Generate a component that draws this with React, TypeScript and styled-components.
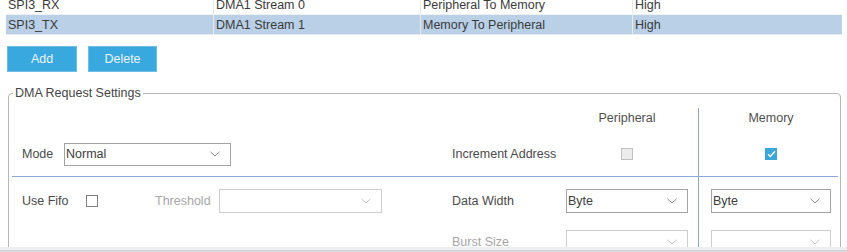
import React from "react";
import styled, { createGlobalStyle, css } from "styled-components";

const GlobalStyle = createGlobalStyle`
  html, body {
    margin: 0;
    padding: 0;
    background: #ffffff;
  }
  body {
    font-family: "Liberation Sans", Arial, sans-serif;
    font-size: 12.5px;
    color: #3b3b3b;
  }
`;

const Page = styled.div`
  width: 847px;
  height: 252px;
  display: flex;
  flex-direction: column;
  overflow: hidden;
`;

const Content = styled.div`
  flex: 1;
  overflow: hidden;
  padding: 0 5px 0 6px;
`;

const ScrollTrack = styled.div`
  height: 3px;
  background: #eceef0;
  border-bottom: 2px solid #d3d7da;
`;

/* ---------- table ---------- */

const Table = styled.div`
  margin-top: -5px;
  width: 836px;
`;

const Row = styled.div<{ selected?: boolean }>`
  display: grid;
  grid-template-columns: 208px 207px 212px 1fr;
  height: 20px;
  background: ${({ selected }) => (selected ? "#b9d0e7" : "#ffffff")};
  border-bottom: 1px solid ${({ selected }) => (selected ? "#e4ebf2" : "#f1f1f1")};
  box-sizing: border-box;
`;

const Cell = styled.div`
  display: flex;
  align-items: center;
  padding-left: 2px;
  border-right: 1px solid #e9e9e9;
  white-space: nowrap;
  &:last-child {
    border-right: none;
  }
`;

/* ---------- buttons ---------- */

const ButtonBar = styled.div`
  display: flex;
  gap: 11px;
  margin: 11px 0 0 1px;
`;

const Button = styled.button<{ w: number }>`
  width: ${({ w }) => w}px;
  height: 26px;
  background: #39a8de;
  border: 1px solid #6ebde6;
  color: #e9f5fc;
  font-family: inherit;
  font-size: 12.5px;
  padding: 0;
  cursor: pointer;
`;

/* ---------- settings ---------- */

const Fieldset = styled.fieldset`
  margin: 14px 0 0 2px;
  width: 833px;
  box-sizing: border-box;
  padding: 7px 0 0 0;
  border: 1px solid #b4b8bc;
  border-radius: 4px;
  min-width: 0;
`;

const Legend = styled.legend`
  margin-left: 4px;
  padding: 0 2px;
  line-height: 15px;
  color: #454545;
`;

const Grid = styled.div`
  display: grid;
  grid-template-columns: 431px 116px 142px 141px;
  grid-template-rows: 24px 44px 1px 48px 34px;
`;

const memoryCol = css`
  border-left: 1px solid #8aa8de;
  padding: 0 8px 0 12px;
`;

const Area = styled.div<{ memory?: boolean; center?: boolean; top?: boolean }>`
  display: flex;
  align-items: ${({ top }) => (top ? "flex-start" : "center")};
  justify-content: ${({ center }) => (center ? "center" : "flex-start")};
  min-width: 0;
  ${({ memory }) => memory && memoryCol}
`;

const PeriphArea = styled(Area)`
  padding: 0 10px;
`;

const LeftArea = styled(Area)`
  padding-left: 13px;
`;

const LabelArea = styled(Area)`
  padding-left: 12px;
`;

const Heading = styled.span`
  margin-top: 3px;
  line-height: 15px;
  color: #505050;
`;

const Label = styled.span<{ disabled?: boolean; w?: number }>`
  color: ${({ disabled }) => (disabled ? "#a6a6a6" : "#4a4a4a")};
  white-space: nowrap;
  ${({ w }) => w && `width: ${w}px;`}
`;

const Divider = styled.div<{ memory?: boolean }>`
  background: #8aa8de;
  ${({ memory }) => (memory ? "margin-right: 1px;" : "margin-left: 3px;")}
`;

const SelectBox = styled.div<{ w?: number; h?: number; disabled?: boolean }>`
  box-sizing: border-box;
  width: ${({ w }) => (w ? `${w}px` : "100%")};
  height: ${({ h }) => h ?? 24}px;
  border: 1px solid ${({ disabled }) => (disabled ? "#cdcdcd" : "#a3a3a3")};
  background: #ffffff;
  display: flex;
  align-items: center;
  justify-content: space-between;
  padding: 0 10px 0 1px;
  color: #3d3d3d;
  svg {
    flex: none;
  }
`;

const Check = styled.span<{ state: "off" | "disabled" | "on" }>`
  box-sizing: border-box;
  width: 12px;
  height: 12px;
  display: inline-flex;
  align-items: center;
  justify-content: center;
  border: 1px solid
    ${({ state }) =>
      state === "on" ? "#3aa6dc" : state === "disabled" ? "#bfc1c4" : "#7d7d7d"};
  background: ${({ state }) =>
    state === "on" ? "#3aa6dc" : state === "disabled" ? "#ececec" : "#ffffff"};
`;

function Chevron({ faded }: { faded?: boolean }) {
  return (
    <svg width="10" height="6" viewBox="0 0 10 6">
      <path
        d="M0.5 0.8 L5 5 L9.5 0.8"
        fill="none"
        stroke={faded ? "#c4c4c4" : "#8a8a8a"}
        strokeWidth="1"
      />
    </svg>
  );
}

function Select({
  value,
  w,
  h,
  disabled,
}: {
  value?: string;
  w?: number;
  h?: number;
  disabled?: boolean;
}) {
  return (
    <SelectBox w={w} h={h} disabled={disabled}>
      <span>{value}</span>
      <Chevron faded={disabled} />
    </SelectBox>
  );
}

function CheckBox({ state }: { state: "off" | "disabled" | "on" }) {
  return (
    <Check state={state}>
      {state === "on" && (
        <svg width="9" height="8" viewBox="0 0 9 8">
          <path d="M1 4.2 L3.4 6.4 L8 1.2" fill="none" stroke="#ffffff" strokeWidth="1.4" />
        </svg>
      )}
    </Check>
  );
}

const requests = [
  ["SPI3_RX", "DMA1 Stream 0", "Peripheral To Memory", "High"],
  ["SPI3_TX", "DMA1 Stream 1", "Memory To Peripheral", "High"],
];

export default function App() {
  return (
    <Page>
      <GlobalStyle />
      <Content>
        <Table>
          {requests.map((r, i) => (
            <Row key={r[0]} selected={i === 1}>
              {r.map((c) => (
                <Cell key={c}>{c}</Cell>
              ))}
            </Row>
          ))}
        </Table>

        <ButtonBar>
          <Button w={70}>Add</Button>
          <Button w={69}>Delete</Button>
        </ButtonBar>

        <Fieldset>
          <Legend>DMA Request Settings</Legend>
          <Grid>
            <Area />
            <Area />
            <PeriphArea center top>
              <Heading>Peripheral</Heading>
            </PeriphArea>
            <Area memory center top>
              <Heading>Memory</Heading>
            </Area>

            <LeftArea>
              <Label w={42}>Mode</Label>
              <Select value="Normal" w={167} h={23} />
            </LeftArea>
            <LabelArea>
              <Label>Increment Address</Label>
            </LabelArea>
            <PeriphArea center>
              <CheckBox state="disabled" />
            </PeriphArea>
            <Area memory center>
              <CheckBox state="on" />
            </Area>

            <Divider style={{ gridColumn: "1 / 4" }} />
            <Divider memory />

            <LeftArea>
              <Label w={64}>Use Fifo</Label>
              <CheckBox state="off" />
              <Label disabled style={{ marginLeft: 57, width: 64 }}>
                Threshold
              </Label>
              <Select disabled w={163} />
            </LeftArea>
            <LabelArea>
              <Label>Data Width</Label>
            </LabelArea>
            <PeriphArea>
              <Select value="Byte" />
            </PeriphArea>
            <Area memory>
              <Select value="Byte" />
            </Area>

            <Area />
            <LabelArea>
              <Label disabled>Burst Size</Label>
            </LabelArea>
            <PeriphArea>
              <Select disabled />
            </PeriphArea>
            <Area memory>
              <Select disabled />
            </Area>
          </Grid>
        </Fieldset>
      </Content>
      <ScrollTrack />
    </Page>
  );
}
